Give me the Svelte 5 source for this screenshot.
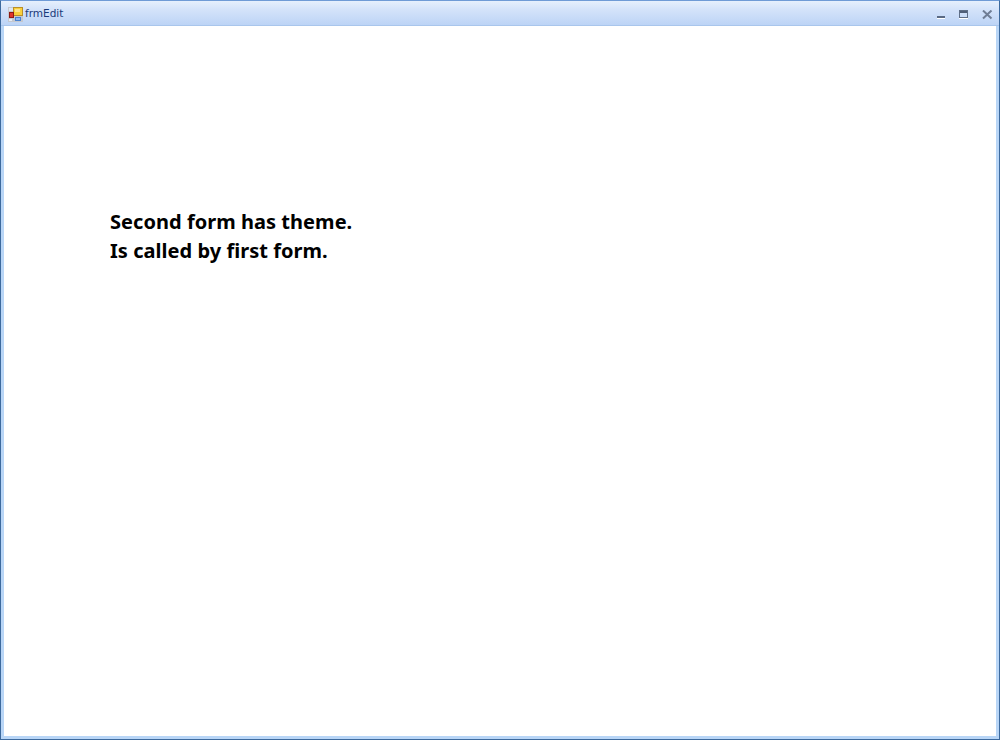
<script>
  const lines = ['Second form has theme.', 'Is called by first form.'];
</script>

<div class="window">
  <header class="titlebar">
    <div class="title">
      <svg class="appicon" width="15" height="15" viewBox="0 0 15 15" aria-hidden="true">
        <rect x="0" y="0" width="15" height="15" fill="#c4c8d0"/>
        <rect x="1" y="1" width="4" height="3" fill="#dde5f2"/>
        <rect x="1" y="12" width="3" height="2" fill="#e6ecf6"/>
        <rect x="5" y="0" width="10" height="9" fill="#b98f28"/>
        <rect x="6" y="1" width="8" height="7" fill="#f9cf3c"/>
        <rect x="7" y="2" width="5" height="3" fill="#fde48a"/>
        <rect x="1" y="5" width="5" height="6" fill="#8e1a14"/>
        <rect x="2" y="6" width="3" height="4" fill="#e0352c"/>
        <rect x="7" y="10" width="6" height="4" fill="#4a82d0"/>
        <rect x="8" y="11" width="4" height="2" fill="#92baf0"/>
      </svg>
      <span>frmEdit</span>
    </div>
    <div class="controls">
      <svg width="10" height="10" viewBox="0 0 10 10" aria-hidden="true">
        <rect x="1" y="6" width="8" height="2" fill="#5a6a84"/>
        <rect x="1" y="8" width="8" height="1" fill="#ffffff"/>
      </svg>
      <svg width="10" height="10" viewBox="0 0 10 10" aria-hidden="true">
        <rect x="0.5" y="0.5" width="8" height="7" fill="none" stroke="#5f6f88"/>
        <rect x="1" y="1" width="7" height="2" fill="#4f5f78"/>
        <rect x="0" y="8" width="9" height="1" fill="#ffffff"/>
      </svg>
      <svg width="11" height="10" viewBox="0 0 11 10" aria-hidden="true">
        <path d="M1 0.5 L9.5 8.5 M9.5 0.5 L1 8.5" stroke="#6f7d95" stroke-width="2" fill="none"/>
      </svg>
    </div>
  </header>
  <main class="client">
    {#each lines as line}
      <p>{line}</p>
    {/each}
  </main>
</div>

<style>
  :global(body) {
    margin: 0;
    background: #fff;
  }
  .window {
    box-sizing: border-box;
    width: 1000px;
    height: 740px;
    display: flex;
    flex-direction: column;
    overflow: hidden;
    border: 1px solid #3d6a9e;
    border-top-color: #6f9bd6;
    background: #b9d6f7;
  }
  .titlebar {
    flex: 0 0 25px;
    box-sizing: border-box;
    display: flex;
    align-items: center;
    justify-content: space-between;
    padding: 3px 6px 0 7px;
    background: linear-gradient(#e6f0fd 0%, #d4e3fa 35%, #bdd4f6 100%);
    border-bottom: 1px solid #a9c6ec;
  }
  .title {
    display: flex;
    align-items: center;
    gap: 2px;
    color: #1a3a7a;
    font-family: "DejaVu Sans", Verdana, sans-serif;
    font-size: 10.5px;
  }
  .title span {
    margin-bottom: 3px;
  }
  .controls {
    display: flex;
    align-items: center;
    gap: 13px;
  }
  .controls svg {
    display: block;
  }
  .client {
    flex: 1;
    margin: 0 3px 3px;
    background: #fff;
    padding: 181px 0 0 106px;
    font-family: "Noto Sans", "Open Sans", sans-serif;
    font-weight: 700;
    font-size: 20px;
    line-height: 29px;
    letter-spacing: 0.04px;
    color: #000;
  }
  p {
    margin: 0;
  }
</style>
